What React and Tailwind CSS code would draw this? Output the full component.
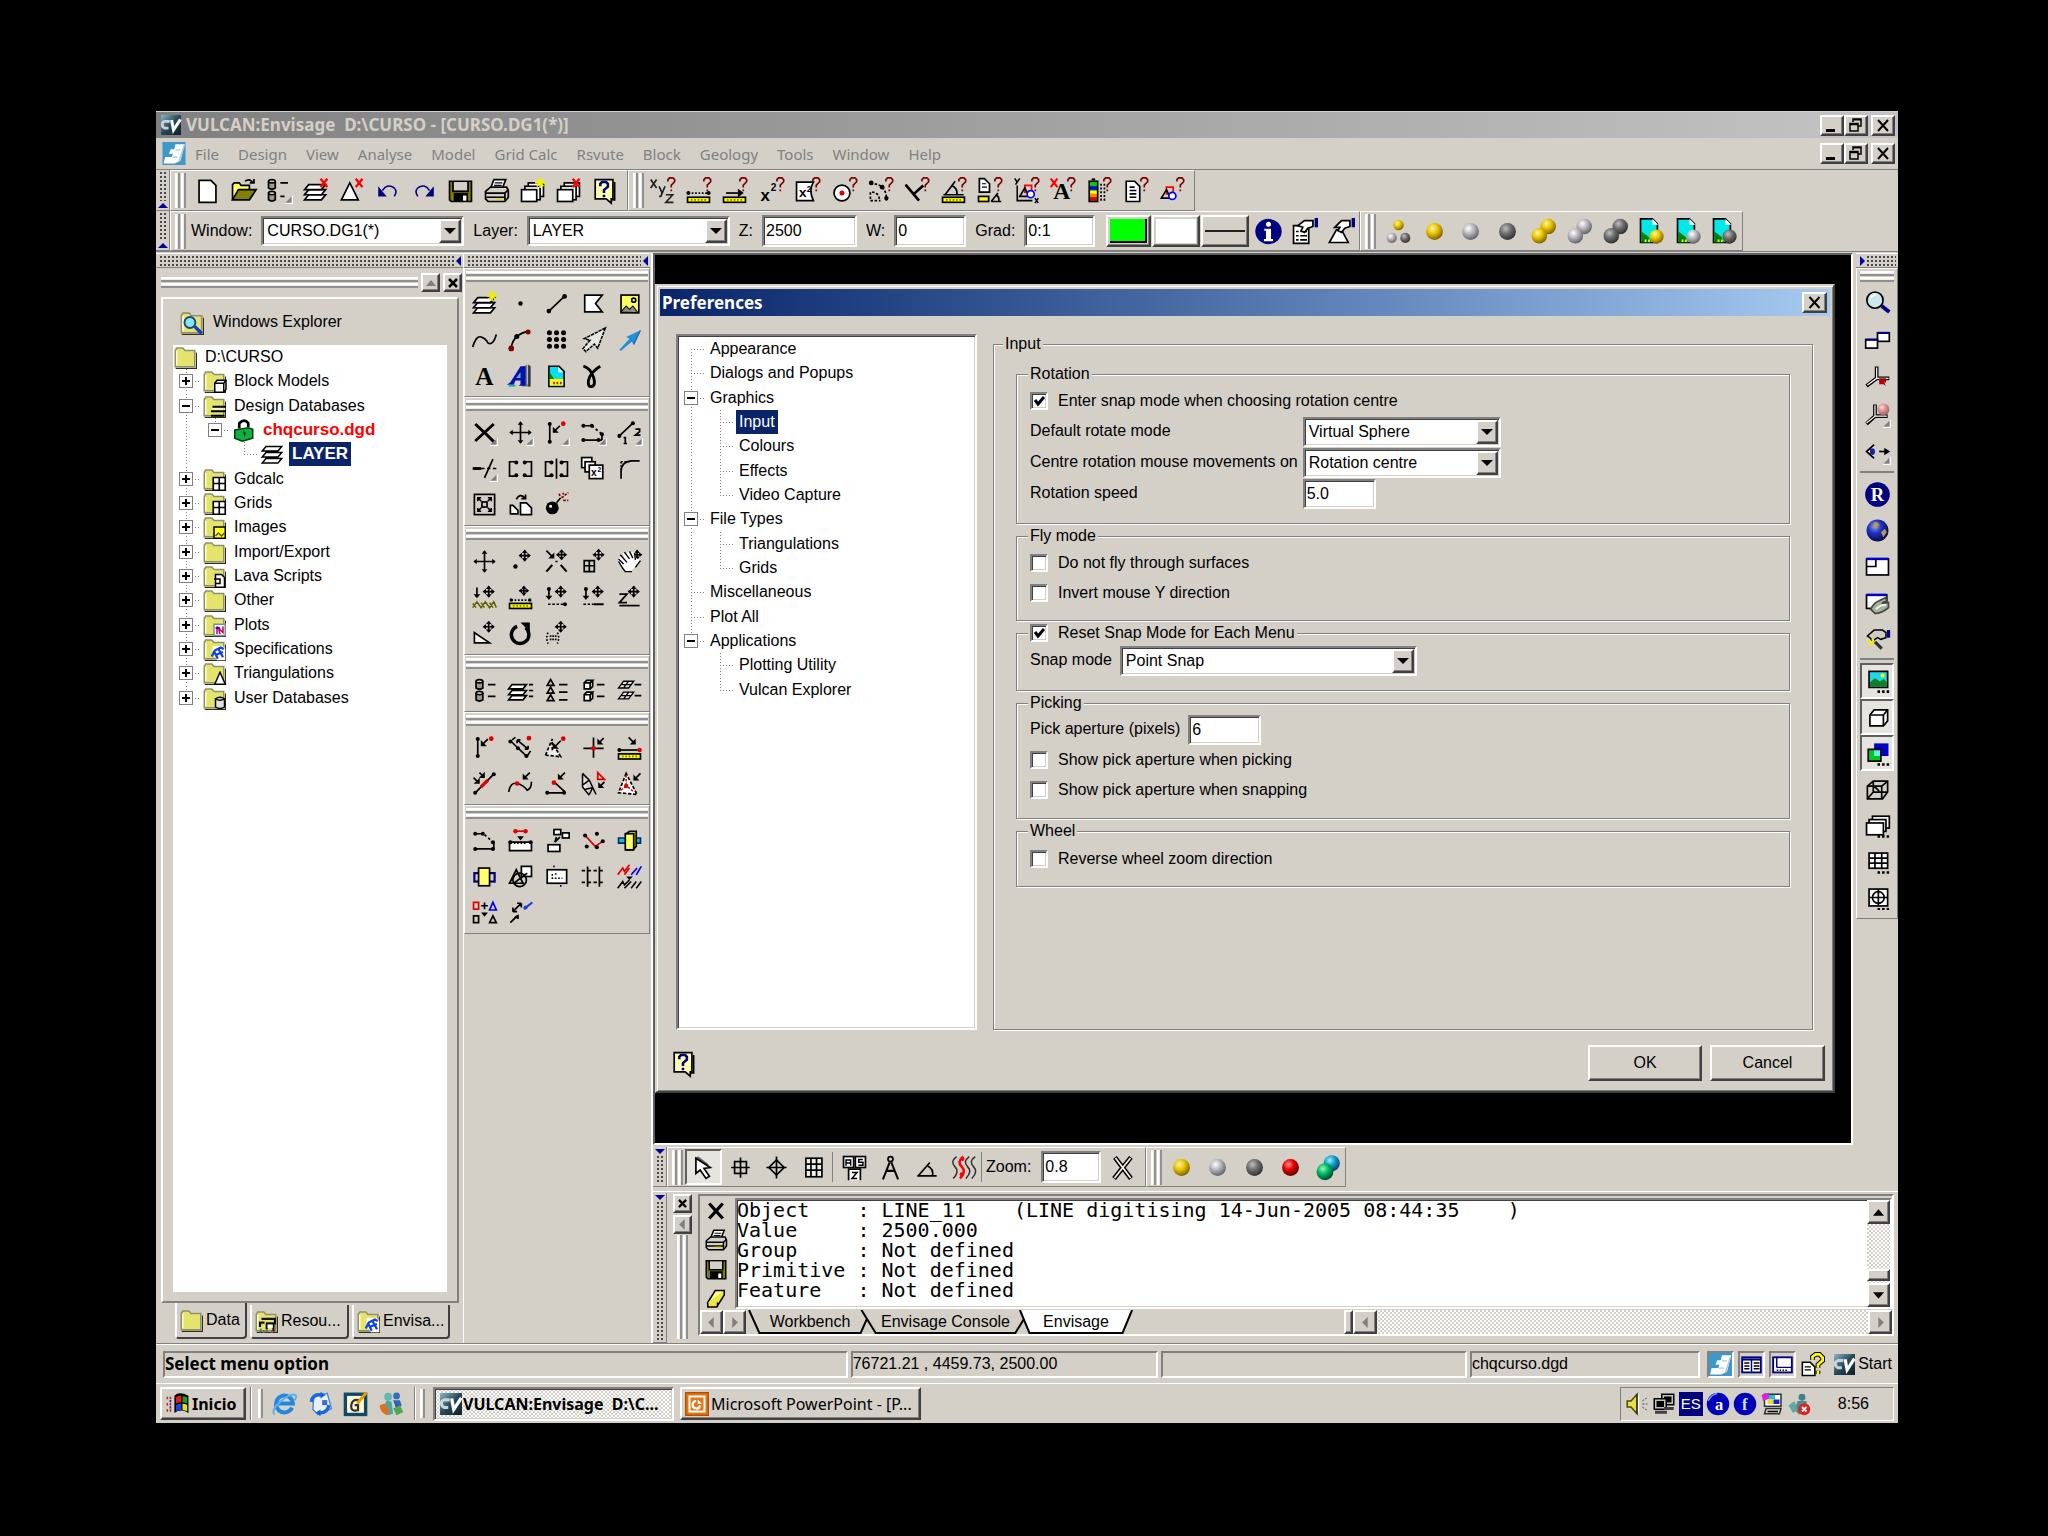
import React, { createElement } from 'react';

const SANS = "font-['Liberation_Sans',Arial,sans-serif]";
const UI = "font-['Noto_Sans',Tahoma,sans-serif]";
const RAISED =
  'border-2 border-t-white border-l-white border-r-[#404040] border-b-[#404040] bg-[#d4d0c8] shadow-[inset_-1px_-1px_0_#808080]';
const SUNKEN =
  'border-2 border-t-[#808080] border-l-[#808080] border-r-white border-b-white shadow-[inset_1px_1px_0_#404040,inset_-1px_-1px_0_#d4d0c8]';
const THIN_SUNKEN = 'border-2 border-t-[#808080] border-l-[#808080] border-r-white border-b-white';
const HATCH = 'bg-[conic-gradient(#fff_25%,#d4d0c8_0_50%,#fff_0_75%,#d4d0c8_0)] bg-[size:4px_4px]';
const DOTS = 'bg-[conic-gradient(at_2px_2px,transparent_75%,#484848_0)] bg-[size:4px_4px]';

/* ---------- drawing helpers (16 x 16 units) ---------- */
const g = (...k) => createElement('g', null, ...k);
const s = (d, c = '#000', w = 1, fill = 'none', dash) => (
  <path d={d} stroke={c} strokeWidth={w} fill={fill} strokeDasharray={dash} />
);
const f = (d, c = '#000') => <path d={d} fill={c} />;
const dot = (x, y, r = 1.2, c = '#000') => <circle cx={x} cy={y} r={r} fill={c} />;
const ring = (x, y, r, c = '#000', fill = 'none', w = 1) => (
  <circle cx={x} cy={y} r={r} stroke={c} strokeWidth={w} fill={fill} />
);
const txt = (x, y, t, size, c = '#000', fam = 'Liberation Sans', style = 'normal', weight = 'bold') => (
  <text x={x} y={y} fontSize={size} fill={c} fontFamily={fam} fontStyle={style} fontWeight={weight}>{t}</text>
);
const RED = '#e00000';
const DK = '#800000';
const NAVY = '#000080';
const q = s('M11.2 2.6V1.5l1-1h2l1 1v1.3l-2 2v1.4M13.2 7.4v1', DK, 1);
const redX = (x = 10.5, y = 1) => s(`M${x} ${y}l4 5M${x + 4} ${y}l-4 5`, '#ff0000', 1.4);
const ruler = (y = 12) => g(<rect x="1.5" y={y} width="13" height="3" fill="#ffff00" stroke="#000" />, s(`M3.5 ${y + 1.5}h9`, '#808000', 1, 'none', '1 1'));
const sheet = (y) => s(`M4 ${y}h10l-2.5 3H1.5z`, '#000', 1, '#fff');
const layers = g(sheet(10.5), sheet(7.5), sheet(4.5));
const corner = g(f('M11 16h5v-5z', '#fff'), f('M11.5 15.2h3.7v-3.7z', '#808080'));
const star = s('M12.5 .5v6M9.5 3.5h6M10.5 1.5l4 4M14.5 1.5l-4 4', '#f0f000', 1);
const move = (x, y, r) =>
  g(
    s(`M${x - r} ${y}h${2 * r}M${x} ${y - r}v${2 * r}`, '#000', 1),
    f(`M${x - r - 0.6} ${y}l2-1.7v3.4zM${x + r + 0.6} ${y}l-2-1.7v3.4zM${x} ${y - r - 0.6}l-1.7 2h3.4zM${x} ${y + r + 0.6}l-1.7-2h3.4z`),
  );
const arrDL = (x, y, l = 4) => g(s(`M${x + l} ${y - l}L${x} ${y}`), f(`M${x - 0.7} ${y + 0.7}v-3.6l3.6 3.6z`));
const arrDR = (x, y, l = 4) => g(s(`M${x - l} ${y - l}L${x} ${y}`), f(`M${x + 0.7} ${y + 0.7}v-3.6l-3.6 3.6z`));
const arrD = (x, y1, y2) => g(s(`M${x} ${y1}V${y2}`), f(`M${x - 2} ${y2 - 1}h4l-2 2.5z`));
const page = (x, y, w, h) => s(`M${x} ${y}h${w - 3}l3 3v${h - 3}h-${w}z`, '#000', 1, '#fff');
const shapes = (x, y) =>
  g(
    s(`M${x + 3} ${y}h4v4h-4z`, '#ff0000'),
    s(`M${x} ${y + 6.5}l3-5 2.4 5z`),
    ring(x + 6.5, y + 5.2, 2.1, '#0000ff', '#fff'),
  );
const ball = (x, y, r, id) => <circle cx={x} cy={y} r={r} fill={`url(#${id})`} />;
const picPage = (id) =>
  g(
    s('M1.5 .5h7l3 3v11h-10z', '#000', 1, '#00e8e8'),
    f('M2 8l4 3 2 3.500H2z', '#008000'),
    f('M8.500 .5v3.500h3.500z', '#fff'),
    s('M4 13.500h5', '#ffff00', 1.500, 'none', '1 1'),
    ball(11, 11, 4.2, id),
  );
const cyl = (x, y) => g(s(`M${x} ${y + 1}v4q2 1.500 4 0v-4`, '#000', 1, '#9a9a90'), <ellipse cx={x + 2} cy={y + 1} rx="2" ry="1" fill="#d0d0c8" stroke="#000" />);
const cube = (x, y) => s(`M${x} ${y + 1.5}h3.500v3.500h-3.500zM${x} ${y + 1.500}l1.500-1.500h3.500l-1.500 1.500M${x + 5} ${y}v3.500l-1.500 1.500`, '#000', 1, '#fff');
const win = (x, y, w = 9, h = 8) => <rect x={x} y={y} width={w} height={h} fill="#fff" stroke="#000" />;
const folder = g(
  f('M1.500 15.200h13.800V4.500l.7 1v10.500H2z', '#303010'),
  s('M1.500 14.500v-11l1-1.500h4l1.500 1.700h6.500v10.800z', '#909070', 1, '#e4e46c'),
  s('M2.500 13.500v-9.500', '#ffffd0'),
);

const ICONS = {
  new: page(3, 2, 10, 13),
  open: g(
    s('M1.500 13.500v-9l1-1h3l1 1.500h5v2.500', '#000', 1, '#ffff60'),
    s('M1.500 13.500l3.500-6h10.500l-4 6z', '#000', 1, '#808000'),
    s('M9 2.500q2.500-2 4.500.7M14.200 1.200v2.300h-2.500'),
  ),
  dbs: g(cyl(1.500, 1.500), cyl(1.500, 8.500), s('M8.500 3.500h4.500M8.500 11.500h2.500'), corner),
  layersX: g(layers, redX(11, 1)),
  triX: g(s('M2 13.500L7 3.500l5 10z', '#000', 1, '#fff'), redX(10.500, 1)),
  undo: g(s('M5 8q3-4.500 7-1.500 2 2 0 5', NAVY, 0.900), f('M2.500 5.500v6h5z', NAVY)),
  redo: g(s('M11 8q-3-4.500-7-1.500-2 2 0 5', NAVY, 0.900), f('M13.500 5.500v6h-5z', NAVY)),
  save: g(
    s('M1.500 2.500h13v12h-12l-1-1z', '#000', 1, '#808000'),
    f('M4 3h8v5H4z', '#d4d0c8'),
    f('M4 9.500h8.500v5H4z'),
    f('M9.500 11h2v3h-2z', '#fff'),
    s('M3.500 2.500V8.500h9v-6'),
  ),
  print: g(
    s('M4.500 6.500l2-5h7l-2 5', '#000', 1, '#fff'),
    s('M7 3.500h4.500M6.500 5h4.500', '#000', 0.7),
    s('M1.500 8.500l3-2.500h9.500l1 2v4l-2 2.500H3l-1.500-1.500z', '#000', 1, '#d4d0c8'),
    s('M1.500 9.500h11.500v4.500M2 12h11M13 9.500l2-2'),
    f('M7.500 12.500h4v1h-4z', '#e0e000'),
  ),
  winNew: g(win(5.500, 3.500), win(3.500, 5.500), win(1.500, 7.500, 9, 7), star),
  winDel: g(win(5.500, 3.500), win(3.500, 5.500), win(1.500, 7.500, 9, 7), redX(10.500, 1)),
  help: g(
    s('M2.500 1.500h10.500v11.500h-1v2.500l-3-2.500h-6.500z', '#000', 1, '#ffffb0'),
    s('M14 3v10.500h-1.500', '#000', 1),
    s('M5.500 5.500V4l1-1h2.500l1 1v1.700l-2.300 2v1.800M7.700 10.500v1.500', NAVY, 1.500),
  ),
  xyz: g(s('M1 1.500l3.500 5M4.500 1.500l-3.500 5M6 5.500l1.800 4M9.500 5.500L7 11.500H6M10 10.500h4l-4 4.500h4.500', '#202020', 1), q),
  dist: g(s('M2 9.500h12', '#000', 1, 'none', '1 1'), dot(2, 9.500), dot(14, 9.500), ruler(12), q),
  bearing: g(s('M3 9.500h8'), f('M10 7l3.500 2.500L10 12z'), ruler(12), q),
  sq: g(txt(1.500, 14, 'x', 10), txt(7.500, 8.500, '2', 6), q),
  sqPage: g(s('M1.500 3h10q-3 5 0 11h-10z', '#000', 1, '#fff'), txt(3, 12, 'x', 8), txt(7.500, 9, '2', 5), q),
  circ: g(ring(6.500, 9.500, 4.700, '#000', '#fff'), dot(6.500, 9.500, 1.500, RED), q),
  arc: g(s('M2 4h2q7 1 7.500 8v2M2 9v5h6M3 9q4 0 4.500 5', '#000', 1, 'none', '1.500 1'), dot(2.500, 3.500, 1.400), dot(9, 6, 1.400), dot(11.500, 12.500, 1.300), q),
  cross: g(s('M1.500 4.500l8 9.500M12 5l-5.500 5', '#000', 1.600), q),
  angleR: g(s('M2 10.500h12M3 10.500l6-8M7 5q3.500 1.500 3 5.500'), ruler(12), q),
  docR: g(page(2, 1, 6, 8), s('M3.500 4h2.500M3.500 6h3', '#000', 0.700), <rect x="1.500" y="11.500" width="6" height="3" fill="#ffff00" stroke="#000" />, s('M9 14.500h6M9 14.500l4-5M12 10.500q2 1.500 1.500 4'), q),
  axes: g(s('M2.500 5v9h9M1 .8l1.300 2M4 .8L1.500 4.500M13 12.500l2 3M15 12.500l-2 3', '#000', 0.900), shapes(4, 5), q),
  textX: g(s('M1 1l4 5M5 1l-4 5', '#ff0000', 1.300), txt(2.500, 12.800, 'A', 14, '#000', 'Liberation Serif'), q),
  legend: g(
    <rect x="2.500" y="2.500" width="5" height="12" stroke="#000" fill="#008000" />,
    f('M3 3h4v2.500H3z', '#00d000'), f('M3 5.500h4v2H3z', '#0000ff'), f('M3 8h4v2H3z', '#ffff00'), f('M3 10h4v2H3z', '#ff8000'), f('M3 12h4v2H3z', '#e00000'),
    f('M4 .8h2V2H4z'), s('M9.500 4v10M11.500 4v10', '#000', 1, 'none', '1.200 1'), q,
  ),
  docQ: g(page(2.500, 2.500, 8, 12), s('M4.500 6h3M4.500 8h4M4.500 10h4M4.500 12h4'), q),
  shapesQ: g(shapes(2, 6), q),
  info: g(<ellipse cx="8" cy="8" rx="7.800" ry="7.500" fill={NAVY} />, dot(8, 3.700, 1.500, '#fff'), f('M5.500 6.300h4v6.200h1.200v1.300H5.300v-1.300h1.200V7.600h-1z', '#fff')),
  props: g(
    s('M1.500 4.500h9v10.500h-9z', '#000', 1, '#fff'), s('M3 8h1.500M5.500 8h4M3 10.500h1.500M5.500 10.500h4M3 13h1.500M5.500 13h4'),
    s('M4 4.500l4-3h5v3.500l-3 1-2 2.500-2-1 1-2z', '#000', 1, '#fff'), f('M14 0h2v5.500h-2z', NAVY),
  ),
  triProps: g(
    s('M.8 14.500L5 7h3l4 7.500z', '#000', 1, '#fff'),
    s('M4 5.500l4-4h5v3.500l-3 1-2 2.500-2-1 1-2z', '#000', 1, '#fff'), f('M14 0h2v5.500h-2z', NAVY),
  ),
  balls3: g(ball(8, 4.200, 3.100, 'gold'), ball(4, 11.800, 3, 'silver'), ball(12, 11.800, 3, 'iron')),
  ballGold: ball(8, 8, 5, 'gold'),
  ballSilver: ball(8, 8, 5, 'silver'),
  ballIron: ball(8, 8, 5, 'iron'),
  ballRed: ball(8, 8, 5, 'red'),
  ballsGold: g(ball(10.800, 5, 4.600, 'gold'), ball(5.500, 10.500, 4.600, 'gold')),
  ballsSilver: g(ball(10.800, 5, 4.600, 'silver'), ball(5.500, 10.500, 4.600, 'silver')),
  ballsIron: g(ball(10.800, 5, 4.600, 'iron'), ball(5.500, 10.500, 4.600, 'iron')),
  ballsSea: g(ball(10.500, 5.500, 4.800, 'cyan'), ball(6.500, 10.500, 5, 'green')),
  picGold: picPage('gold'),
  picSilver: picPage('silver'),
  picIron: picPage('iron'),

  layersNew: g(layers, star),
  point: dot(8, 8, 1.300),
  line: g(s('M3.500 12.500l9.500-9'), dot(3.500, 12.500, 1.400), dot(12.800, 3.800, 1.400)),
  poly: s('M2.800 3h10.400l-4 5 4 5H2.800z', '#000', 1, '#fff'),
  image: g(<rect x="3" y="3" width="10.500" height="10.500" fill="#ffff60" stroke="#000" />, ring(10.500, 6, 1.200), s('M3 13l3-3.500 2 2 2-2 3 4z', '#000', 0.600, '#909080')),
  curve: s('M1 12.500q2-7 5-6t4 3.500q3 2 5-5'),
  arc3: g(s('M2.500 13q1-8.500 11-10'), dot(2.500, 13.300, 1.700, DK), dot(12.500, 3.500, 1.500, DK), dot(5.800, 6.200, 1.500)),
  dots9: g(...[3.800, 8, 12.200].flatMap((x) => [4, 8, 12].map((y) => dot(x, y, 1.500)))),
  arrowO: s('M15 1.200l-4.500 12-2-2.500-5 4.500-1.800-1.800 4.300-5L2.500 7.500z', '#000', 0.900, '#e8e6e0', '2 .5'),
  arrowB: g(f('M14.500 2.500l-4 8.500-1.200-1.700-6.500 5.500-.8-.8 6-6.500L6 6.500z', '#2090d8'), s('M14.500 2.500l-4 8.500', '#2060a0', 0.700)),
  A: txt(2.500, 13.500, 'A', 15, '#000', 'Liberation Serif'),
  A3d: g(f('M9.500 3l2.500-1.500v11.500l2 1.500H9z', '#707c84'), f('M12.500 1.500l1.500 1v12h-1.500z', '#303840'), f('M8 2.500h3V14H7l1-1v-2H5l-1 2.500H0l2-1.500z', '#0010a8'), f('M8 6v3.500H5.500z', '#50c0e8'), s('M1 14h4', '#20b0a0', 1.200)),
  imgPage: g(s('M3.500 2.500h6l3 3v9h-9z', '#000', 1, '#00e0f0'), f('M4 10h8v4H4z', '#ffff00'), f('M4 6l2.500 4H4z', '#008000'), f('M9 3v3h3z', '#fff'), s('M6 12.500h6', '#c00000', 1.500, 'none', '1 1')),
  ribbon: s('M2 2.500q4 1 6 6.500q1.500 5-1 5.500t-2-3.500q1-5 7-8.500', '#000', 1.700),
  del: g(s('M2.500 3l6 5.500M13.500 3l-11 10M8.500 8.500l5.500 5.500', '#000', 1.700), corner),
  moveM: g(move(8, 8, 6)),
  moveC: g(move(8, 8, 6), corner),
  ptMove: g(s('M4 3v10.500'), dot(4, 3), dot(4, 13.500), arrDL(6.500, 7.500, 3.500), dot(12, 2.800, 1.400, RED), corner),
  lineAdd: g(s('M2 4h5M2 12.500h11M13 12.500v-3.500'), s('M7 4l6 5', '#000', 1, 'none', '1.500 1.500'), dot(2, 4), dot(7, 4), dot(13, 9), dot(2, 12.500), dot(11, 12.500), corner),
  renum: g(s('M2 10l8-7.500'), dot(2, 10), dot(10, 2.500), s('M5.500 10.500v4M4.500 11h1M4.500 14.500h2M11.500 6h2.500v1.500l-2.500 2h3'), corner),
  cut: g(s('M1 8h5', '#000', 1.700), s('M6 8h9', '#000', 1, 'none', '2 1.500'), s('M13 2.500L8 13.500'), corner),
  brk: g(s('M6 4H1.500v8.500H6M10 4h4.500v8.500H10'), dot(5.500, 4.500), dot(5.500, 12), dot(10.500, 4.500), dot(10.500, 12)),
  brk2: g(s('M6 4H1.500v8.500H6M10 4h4.500v8.500H10M8 2v12'), dot(5, 4.500), dot(5, 12), dot(11, 4.500), dot(11, 12)),
  sqWin: g(win(1, 1.500, 6, 6), win(3, 4, 6, 6), win(5.500, 6, 8, 8), txt(6.500, 12.500, 'x', 6), txt(10.300, 9.800, '2', 4)),
  fillet: g(s('M3 4h5M3 4v6', '#000', 1, 'none', '1 1'), s('M3 14V10q0-6 6-6.500h5')),
  expand: g(<rect x="2" y="2" width="12" height="12" stroke="#000" />, <rect x="6.500" y="6.500" width="3" height="3" stroke="#000" />, s('M4 4l2 2M12 4l-2 2M4 12l2-2M12 12l-2-2M4 6V4h2M10 4h2v2M4 10v2h2M12 10v2h-2', '#000', 0.900)),
  copy: g(page(2, 8.500, 4.500, 5), page(8, 7, 6.500, 7), s('M5.500 5q2-4 5-1M11 2v2.500H8.500')),
  bomb: g(dot(5.500, 10, 3.800), s('M8 7l2.500-3'), s('M11 4l4-3M12 5.500h3M10 3L9.500 1M12 2v-1', DK, 1, 'none', '1.500 .8'), ring(4.500, 9, 0.400, '#fff')),
  mPt: g(move(10.500, 4.500, 3), dot(5, 11, 1.300)),
  mX: g(move(11, 4, 2.700), arrDR(6, 5.500), s('M2 14l3.500-4M14 14l-3.500-4M8 7.500v1', '#000', 1.300)),
  mGrid: g(move(11, 4, 3), s('M2.500 7.500h6v6.500h-6zM5.500 7.500v6.500M2.500 10.500h6')),
  hand: g(move(12.500, 4, 2.500), f('M3 5l2 1-1-3 2 .5L7.500 2l2 .5L11 3l1 3 2.500 1-3 4-2.500 2.500H5.500L3 10 1 7z', '#fff'), s('M1.500 6.500l3 3M2.500 4l4 4.500M5 2.500l3 4M8 2l2 4M11 3l.5 4M1.500 8l2.500 4 1.500 2h4M14.500 7.500l-3 4', '#000', 0.800)),
  mSurf: g(arrD(3.500, 2, 7), move(10.500, 4.500, 3), s('M1 14l2.500-3.500 2.500 3.500 2.500-3.500 2.500 3.500 2.500-3.500L15 14M1 11.500l2 2.500M6 11l2 3M11 11l2 3', '#606000', 0.900)),
  mRule: g(move(10, 4, 2.500), s('M2.500 9.500h11', '#000', 1, 'none', '1 1'), dot(2.500, 9.500, 1), dot(13.500, 9.500, 1), ruler(11.500)),
  mLine: g(dot(3.500, 3), arrD(3.500, 3, 8), move(10.500, 4.500, 3), s('M3 12h10', '#000', 1, 'none', '1.500 1'), dot(13, 12, 1.200)),
  mLine2: g(dot(3.500, 3), arrD(3.500, 3, 8), move(10.500, 4.500, 3), s('M2 12h6', '#000', 1, 'none', '1.500 1'), s('M8 12h6', '#000', 1.200)),
  mZ: g(s('M2 6h4.500L2 11h4.500'), move(10.500, 4.500, 3), s('M2 12.800h12')),
  mTri: g(move(10.500, 4, 3), s('M2 7.500v6h9z', '#000', 1, '#f4f2ec')),
  rotate: g(s('M6 3.800a5.200 5.200 0 1 0 5 .8', '#000', 2), f('M8 1.500h5.500V7z')),
  mBrk: g(move(10.500, 4, 3), s('M3 7.500q-1.500 3 0 6.500M8.500 7.500q1.500 3 0 6.500M4.500 9v4M6 9v4M7.500 9v4', '#000', 1, 'none', '1 1')),
  dbList: g(cyl(3, 1.500), cyl(3, 8.500), s('M10 4.500h4.500M10 11.500h4.500')),
  layList: g(s('M3 4.500h8.500l-2 2.500H1zM3 8h8.500l-2 2.500H1zM3 11h8.500l-2 2.500H1z', '#000', 1, '#fff'), s('M13 4.500h2.500M13 8h2.500M13 11.500h2.500')),
  triList: g(s('M2.500 5h4l-2-3.500zM2.500 9.500h4l-2-3.500zM2.500 14h4l-2-3.500z'), s('M9.500 4.500h5M9.500 9h5M9.500 13.500h5')),
  cubeList: g(cube(2.500, 2), cube(2.500, 9), s('M10 4.500h4.500M10 11.500h4.500')),
  gridList: g(s('M4.500 2.500h6l-3 4H1.500zM4.500 9h6l-3 4H1.500zM7.500 2.500l-3 4M3 4.500h6M7.500 9l-3 4M3 11h6', '#000', 0.800, '#e8e6e0'), s('M11 4.500h4M11 11h4')),
  snapPt: g(s('M4 3v10'), dot(4, 3), dot(4, 13), arrDL(6.500, 6.500, 3.500), dot(12, 2.800, 1.400, RED)),
  snapLn: g(s('M2 4l10 9.500'), s('M5 2L3 3.500M14 10l-2 3', '#000', 1), dot(2, 4.500), dot(6.500, 8.500), dot(11.500, 13), s('M6 3.500l6.500 5.500M6 3.500v2M6 3.500h2M12.500 9v-2M12.500 9h-2'), dot(13, 2.500, 1.400, RED)),
  snapTri: g(s('M1.500 12.500L5.500 3v7M1.500 12.500l9 1-3-5', '#000', 1, '#f0eee8', '2 1'), arrDL(6.500, 8, 4), dot(12, 2.800, 1.400, RED)),
  snapX: g(s('M2 8.500h12M8 2v12'), dot(8, 8.500, 1.400, RED), arrDL(11, 5.500, 3)),
  snapRule: g(arrDR(11, 5.500, 3.500), s('M2 9.500h12'), dot(2, 9.500), dot(14, 9.500, 1.300, RED), ruler(11.800)),
  snapMid: g(s('M2.500 13.500l11-11'), s('M6 10l4-4', RED, 2), dot(2.500, 13.500), dot(13.500, 2.500), arrDR(4.500, 7.500, 3), arrDR(7.500, 4, 2.500)),
  snapCrv: g(s('M1 13q1-6 5-5t6 4q2.500-1 2.500-5'), dot(6, 8, 1.400, RED), arrDL(10, 5, 3.500)),
  snapAng: g(s('M2.500 13.500h10M13 13L7 7.500'), dot(2.500, 13.500), dot(12.500, 13.500), dot(6.500, 7.500, 1.400, RED), arrDL(9.500, 5, 3.500)),
  snapSurf: g(s('M1.500 2l4 4 4 8.500M1.500 2v8l4 5M1.500 9l4-3M2.500 11.500l5-1M5.500 14.500l2-4', '#000', 0.900, '#f0eee8'), s('M10.500 1.500v4h4z', RED), arrDL(11.500, 10, 3)),
  snapCen: g(s('M6 2L1.500 13.500l11 1z', '#000', 1, '#fff', '2 1'), s('M6 3v6M3 12l3-2.500M10 12.500L7 10', RED, 0.900, 'none', '1.500 .8'), dot(6, 9.500, 1.300, RED), arrDL(11, 5.500, 3.500)),
  ed1: g(s('M2.500 4h5M2.500 13h11v-4'), s('M8 4.500l5 4.500', '#000', 1, 'none', '1.500 1.500'), dot(2.500, 4), dot(7, 4), dot(13, 9), dot(13, 13), dot(2.500, 13)),
  ed2: g(s('M5 2.500h6', RED), dot(5, 2.500, 1.300, RED), dot(11, 2.500, 1.300, RED), f('M6 5.500h4L8 8z'), s('M1.500 9v5h13V9z', '#000', 1, '#fff'), s('M4 9.500h8', '#000', 1, 'none', '1 1'), dot(2, 9), dot(14, 9)),
  ed3: g(win(6.500, 1.500, 4, 3), win(11.500, 3.500, 4, 3), win(3, 10.500, 7, 4), s('M8 6l-1 3M10 6L7 9')),
  ed4: g(s('M3 5l6 6.500 4.500-3', RED), dot(3, 5), dot(10, 4), dot(13.500, 8.500), dot(10, 12), dot(4, 11.500)),
  ed5: g(s('M1.500 6.500h13v3h-13z', '#003060', 1, '#20b8d8'), s('M6 4l2-1.500h4v9l-2 2H6z', '#000', 1, '#c8c800'), <rect x="5.500" y="4" width="5" height="9.500" fill="#ffff60" stroke="#000" />),
  ed6: g(<rect x="2" y="6" width="12" height="5" stroke={NAVY} strokeWidth="1.300" />, <rect x="4.500" y="3" width="6.500" height="10.500" fill="#ffff70" stroke="#000" />),
  ed7: g(win(8.500, 2, 6, 6), s('M1.500 12L5.500 4l4 8z'), ring(7.500, 10, 4, '#000'), s('M4 12l8-6')),
  ed8: g(<rect x="2.500" y="4" width="11.500" height="8" fill="#fff" stroke="#000" />, s('M5.500 6.500v2.500h6M7 6.500h2M10.500 13v2M6.500 1.500v2', '#000', 0.900, 'none', '1 1')),
  ed9: g(s('M4.500 2v12M11.500 2v12'), s('M1 4.500h14M1 11.500h14', '#000', 1, 'none', '2 1.500')),
  ed10: g(s('M1 7l3-4 1 2 3-4M5 7l3-4', RED), s('M9 7l3.500-4M12 7l3-5', '#0000e0'), f('M6 8h4l-2 2z'), s('M1 15l3-4 1 2 3-3M5 15l4-4M9 15l3-4M12 15l3-4', '#000', 0.900)),
  ed11: g(<rect x="1.500" y="2" width="3" height="4" stroke={RED} />, s('M8 2v4M6 4h4'), s('M11 6.500h4l-2-4.500z', '#0000e0'), f('M6 8h4l-2 2.500z'), <rect x="1.500" y="10" width="3" height="4" stroke="#000" />, s('M11 14h4l-2-4z')),
  ed12: g(s('M2 14l4-4', '#000', 1.200), f('M4 11l3-2v3z'), s('M3.500 7.500l5-5M3.500 7.500v-2.500M3.500 7.500h2.500M8.500 2.500h-2.500M8.500 2.500v2.500'), s('M10 6l5-4', '#2040e0', 1.200), dot(11, 5, 1.200, '#2040e0')),

  magnify: g(ring(6.500, 6, 4.800, '#000', '#c8e8ec'), s('M4 4.500q1-1.500 3-1.500', '#fff', 1.200), s('M10.500 9.500l4.500 3.500', NAVY, 2.300)),
  twoWin: g(<rect x="8" y="3.500" width="7" height="5" fill="#fff" stroke="#000" />, s('M8 3.500h7', NAVY, 1.300), <rect x="1" y="7.500" width="7" height="5" fill="#fff" stroke="#000" />, s('M1 7.500h7', NAVY, 1.300)),
  axis: g(s('M7.500 1.500v7l-6 4.500M7.500 8.500h7.500', '#000', 2.200), s('M7.500 2v6.500l-5.500 4M7.500 8.500h7', '#fff', 0.700), f('M9 8.500h4v2.500h-1l1 2-1.500-1L9 12z', '#b00000')),
  axisBall: g(s('M6.500 2v7l-5 4.500M6.500 9h7.500', '#000', 2.200), s('M6.500 2.500V9l-5 4M6.500 9h7', '#fff', 0.700), ball(11.500, 5, 3.500, 'pink'), corner),
  eye: g(s('M6 4L1.500 8l4.500 4', '#000', 1, '#f4f4ff'), f('M3.500 6.500q3-1.500 3 1.500t-3 1.500z', '#2020a0'), s('M9 8h4'), f('M12 5.800L15.500 8 12 10.200z'), corner),
  R: g(<circle cx="8" cy="8" r="7.300" fill={NAVY} />, txt(4, 12, 'R', 11, '#fff', 'Liberation Serif')),
  globe: g(ball(8, 8, 6.500, 'earth'), f('M6 3q3 0 3 2l-2 2-2-1zM10 9l2.500-2 1 2-2 3z', '#b09850')),
  winSplit: g(<rect x="1.500" y="3.500" width="13" height="9.500" fill="#fff" stroke="#000" />, s('M1.500 3.500h13', '#0000d0', 1.500), s('M1.500 8h5.500V4')),
  winPic: g(<rect x="1.500" y="3.500" width="12" height="8" fill="#fff" stroke="#000" />, s('M1.500 3.500h12', '#0000d0', 1.500), s('M4 12q2-4 5-5l4-2 .5 2-3 1.500 4-.5v3q-4 3.500-8 3.500z', '#404840', 1, '#a8b0a0'), s('M7 12q3-3 6-2.500', '#f0f0e8', 1.200)),
  handWand: g(s('M2 6.500l4-3.500h5l2 1.500v3l-3 1-2-1-3 2-1-1.500z', '#000', 0.900, '#d0ccc4'), f('M13.500 3h2v4.500h-2z', NAVY), s('M2 9.500l3 1M3.500 12l2-1.500M5 8l.5 2', '#f0f000', 1.300), s('M6.500 10l4 4', '#303030', 1.800)),
  picture: g(<rect x="3" y="2" width="11" height="9.500" fill="#20d8e8" stroke="#000" />, f('M3.500 8.500l3-2.500 3 2 2-1.500 2 2v2.500h-10z', '#108020'), dot(11, 4.500, 1.200, '#ffff00'), s('M8 14h7', '#000', 1.500, 'none', '1.500 1.200')),
  box: g(s('M3.500 6.500L6 3.500h8v6.500l-2.500 3h-8z', '#000', 1, '#fff'), s('M3.500 6.500h8v6.500M11.500 6.500L14 3.500')),
  layersCol: g(f('M6 2h8.500v7.500H6z', '#0000c8'), f('M2.500 5.500h7.500v7H2.500z', '#00c820'), f('M6 5.500h4v4H6z', '#60f0f0'), s('M2.500 5.500h7.500v7H2.500z'), s('M8 14.500h7', '#000', 1.500, 'none', '1.500 1.200')),
  wire: s('M2 6l3.500-3h8.500v6.500l-3 4H2zM2 6h8.500l3.500-3M10.500 6v7M5.500 3v6.500h8.500M2 13.500l3.500-4M6 6l3 3'),
  wins: g(win(5, 2.500, 10, 7), win(3, 4.500, 10, 7), win(1.500, 6.500, 10, 7), s('M8 14.500h7', '#000', 1.500, 'none', '1.500 1.200')),
  grid: g(<rect x="3" y="3" width="11" height="9" fill="#fff" stroke="#000" />, s('M6.500 3v9M10.500 3v9M3 6h11M3 9h11'), s('M8 14.500h7', '#000', 1.500, 'none', '1.500 1.200')),
  gridTarget: g(<rect x="3" y="3" width="11" height="10" fill="#fff" stroke="#000" />, ring(8.500, 8, 3.500), s('M8.500 3v10M3 8h11'), s('M8 14.800h7', '#000', 1.300, 'none', '1.500 1.200')),

  pointer: g(f('M3 2l2-.5 6 4.500-1 2-3-1z', '#606060'), s('M3.500 2.500v9l2.500-2 3.500 5 2-1.300-3.200-4.700 3.700-.5z', '#000', 1, '#fff')),
  snapSq: g(<rect x="4.500" y="4.500" width="7" height="7" stroke="#000" />, s('M8 2v12M2.500 8h11')),
  snapDi: g(s('M8 3.500L12.500 8 8 12.500 3.500 8z'), s('M8 1.500v13M2 8h12')),
  gridB: g(<rect x="3.500" y="2.500" width="9.500" height="11" fill="#f0f0e8" stroke="#000" />, s('M6.500 2.500v11M9.800 2.500v11M3.500 6h9.500M3.500 9.500h9.500')),
  keys: g(win(1.500, 1.500, 6, 6.500), win(8.500, 1.500, 6, 6.500), f('M4.500 9h7v6.500h-7z', '#fff'), s('M4.500 15.500V9h7v6.500'), s('M3 7V3.500h2.700V7M3 5.300h2.700M13 3.200h-2.500v1.700H13v1.800h-2.700M6.500 11h3l-3 3.500h3', '#000', 0.900)),
  compass: g(ring(8, 3, 1.500), s('M7.500 5L3.500 15M8.500 5l4 10M5 10h6', '#000', 1.200)),
  angle: s('M2.500 13h11.500M3 13l7-8M8.500 7q4 2 3 6'),
  waves: g(s('M4.500 1.500q-4 3-1 6t-1 7M12 1.500q-4 3-1 6t-1 7M15.500 1.500q-4 3-1 6t-1 7', '#303030', 0.900), s('M8.500 1.500q-4 3-1 6t-1 7', '#ff0000', 1.500), dot(8, 3, 1.200, '#ff0000'), dot(7.500, 12, 1.200, '#ff0000')),
  bigX: g(s('M3.500 2l9.500 12.500M13 2L3 14.500', '#000', 2.800), s('M3.800 2.400l9 11.800M12.700 2.400L3.300 14.200', '#f4f4ec', 1)),
  x: s('M3.500 3l9 10M12.500 3l-9 10', '#000', 2.200),
  eraser: g(s('M2.500 11l5-8h6l-4.500 8z', '#000', 1, '#ffff90'), s('M2.500 11v3h6l5-8V3M9 11v3', '#000', 1, '#e8e840')),

  explore: g(folder, ring(7, 8, 3.500, '#204080', '#80e8f8', 1.200), s('M10 10.500l4.500 4.500', '#1040c0', 2.200)),
  folder,
  fBlock: g(folder, s('M8.500 9.500l1.500-2h6v6l-1.500 2h-6z', '#000', 1, '#fff'), s('M8.500 9.500h6v6M14.500 9.500l1.500-2')),
  fLayers: g(folder, s('M7 8.500h9M6 11.500h10M6 14.500h9', '#000', 1.300), s('M6.500 10h9', '#fff', 0.800)),
  fGrid: g(folder, s('M7.500 7h8v8.500h-8zM11.500 7v8.500M7.500 11h8', '#000', 1.100, '#fff')),
  fImage: g(folder, s('M8 8h7.500v7.500H8z', '#000', 1, '#ffff20'), s('M9 14l2-2 2 2 2-2', '#605820')),
  fScript: g(folder, s('M9 7h4l2 2v6.500H9zM8 10h4v3H9', '#000', 1, '#fff')),
  fPlot: g(folder, s('M8 7.500h7.500v7.500H8z', '#8888a0', 1, '#fff'), s('M10 14v-5M12 14l-1-4 3 3v-4', '#c00060'), s('M9 10h3', '#0000e0')),
  fSpec: g(folder, f('M7 6h7l1.500 2v7.500H10L7 11z', '#fff'), s('M6.500 13l2-4 4-2 2 1M8 9.500l2.500 5M11 8l3 5.500M9 12l5-2', '#1040e0', 1.500)),
  fTri: g(folder, s('M8.500 15.500L12 7.500l3.500 8z', '#000', 1, '#fff')),
  fDb: g(folder, s('M9 8.500v5.500q3 2 6 0V8.500q-3-2-6 0q3 2 6 0', '#000', 1, '#e0e0e0')),
  fRes: g(folder, s('M5 6.500h9v3H8M4 12V9h3M13 10v5M8.500 9.500v4', '#101010', 1.500), f('M9 10.500h3.500v2H9z', '#fff'), s('M4.500 13v2.500M8.500 13.500v2', '#20a020', 1.200), s('M6.500 14v2M12 14v2', '#d020c0', 1.200)),
  lock: g(s('M5.500 7V3.500q3.500-3.500 6 0V6', '#000', 1.800), s('M2.500 8l9-1.500 3 1v6l-7 2-5-2z', '#004010', 1, '#10b040'), f('M8 8.500l2 1.500-1 3z', '#004010')),
  sheets: g(s('M4 3h10.500L12 6H1.500zM4 7h10.500L12 10H1.500zM4 11h10.500L12 14H1.500z', '#000', 1, '#fff')),

  cv: g(f('M0 0h16v16H0z', 'url(#steel)'), s('M7 5H3Q1 5.500 1 7.500t2 3h3', '#c8d4dc', 2.200), s('M8.500 4l1.500 8L15.500 3.500', '#fff', 2.400)),
  steps: g(f('M0 0h16v16H0z', '#3c98c8'), f('M9 1.500h6.500l-3 11.500-4 2H.8l1-4.500h4.700l.8-2.300H4.500L5.700 5h2.500z', '#fff'), s('M15 2.500l-3.500 11', '#b0c8d4', 1), s('M9 5.500h3.500M7 10.500h3.500', '#a8ccdc', 0.800)),
  pane1: g(<rect x="1.500" y="3" width="13" height="10.500" fill="#fff" stroke={NAVY} strokeWidth="1.300" />, s('M1.500 4.500h13', NAVY, 1.500), s('M8 4v9', NAVY), s('M3 7h3.500M3 9h3.500M3 11h3.500M9.500 7h4M9.500 9h4M9.500 11h4', '#000')),
  pane2: g(<rect x="1.500" y="3" width="13" height="10.500" fill="#fff" stroke={NAVY} strokeWidth="1.300" />, s('M4 3v7M4 10h10.500', NAVY), s('M4 12h8', '#000', 1, 'none', '1 1')),
  helpDoc: g(page(1.500, 6.500, 8, 8.500), s('M3 9.500h4M3 11.500h4', '#000', 0.800), s('M8 5V3l2-1.500h2.500l2 2v2l-3 2.500v2M11.500 12v2', '#000', 3), s('M8 5V3l2-1.500h2.500l2 2v2l-3 2.500v2M11.500 12v2', '#ffff00', 1.700)),
  flag: g(
    f('M6 3q3-3 9 0v11q-5-3-9 0z'), f('M7 4q2-1.200 3.500-.8v4Q9 7 7 8z', '#e02020'), f('M11.200 3.400q1.500 0 3 .6v4q-1.500-.8-3-.8z', '#20a020'),
    f('M7 9q2-1 3.500-.8v4Q9 12 7 13z', '#2040e0'), f('M11.200 8.200q1.500 0 3 .8v4q-1.500-.8-3-.9z', '#e8e020'),
    s('M1 4.500h4M1 8.500h4M1 12.500h4', '#c02020', 1.500, 'none', '1 1'), s('M3 6.500h2M3 10.500h2', '#2020a0', 1.500, 'none', '1 1'),
  ),
  ie: g(s('M12.500 10.500a5 5 0 1 1 .5-2.500H4', '#2088e0', 2.300), s('M2 14.500q-2-3 4-8t8.500-3.500q1 .7-.5 3', '#60b0e8', 1.200)),
  outlook: g(s('M4 4l8-2 2.500 9-8 3.500-3-3z', '#5080d0', 0.800, '#e8f0fc'), s('M2.500 7q1-5 6-4M13 9q-1 5-6 4.500', '#1868e0', 2), f('M8 1v4l3-2zM8 11.500v4l-3-2z', '#1060d8'), f('M9 6h3v3H9z', '#3070d0')),
  edit: g(<rect x="2" y="2.500" width="12" height="12" fill="#fff8d0" stroke="#104868" strokeWidth="2" />, s('M10 6q-4-1-4.500 3t4 3v-3h-2', '#303030', 1.300), s('M9 8l5.500-6.500', '#e0a000', 1.800)),
  msn: g(dot(6, 4, 2.300, '#60b8b0'), dot(11, 3.500, 2, '#3070c0'), f('M5 6l3 1 1 7-3 1-3-3z', '#48a8a0'), f('M9 6h4l1 3-3 3z', '#3060c0'), f('M1 9l3-1 3 5-2 2q-4-2-4-6z', '#e07020'), f('M9 11l4-2 2 4-4 2z', '#50a850')),
  ppt: g(<rect x="0.500" y="0.500" width="15" height="15" fill="#e07818" stroke="#b85000" />, <rect x="3" y="3" width="10" height="10" stroke="#fff" strokeWidth="1.300" />, s('M10 9a2.500 2.500 0 1 1-2.500-3', '#fff', 1.500), f('M8.500 5v3h3z', '#fff')),
  speaker: g(s('M1.500 6h2.500l4-4.500v13L4 10H1.500z', '#504800', 1, '#e8e040'), s('M9 2v12', '#fff', 1), s('M8 1.500v13', '#303030', 1), s('M11.500 6l3-2M11.500 8h3.500M11.500 10l3 2', '#808080', 0.900, 'none', '1.500 .8')),
  net: g(<rect x="6.500" y="1.500" width="8" height="7" fill="#c0c0c0" stroke="#000" />, f('M8 3h5v4H8z'), <rect x="1.500" y="4.500" width="8" height="7" fill="#c0c0c0" stroke="#000" />, f('M3 6h5v4H3z'), s('M2 13.500h8M8 11h6.500', '#404040', 2)),
  discA: g(dot(8, 8, 7.500, '#0000b8'), s('M1.500 6q2-4.500 6-5', '#60a0f0'), txt(6, 12, 'a', 11, '#fff', 'Liberation Serif')),
  discF: g(dot(8, 8, 7.500, '#0000b8'), txt(6, 12, 'f', 11, '#d0e0ff', 'Liberation Serif')),
  display: g(<rect x="3" y="1.500" width="11" height="8" fill="#fff" stroke="#303030" />, f('M1 2l5-1.500v4L2 6z', '#e020e0'), f('M6 2h4v3H6z', '#20c0e0'), f('M5 5h4v3H5z', '#e8e020'), f('M9 5h4v3H9z', '#2020d0'), s('M4 11h10l-1 3.500H3z', '#303030', 1, '#d0d0c8'), s('M5 13h7')),
  msnOff: g(dot(10, 3.500, 2.300, '#408088'), f('M7 6h6l1 7-6 2-3-3z', '#508890'), f('M1 9l4-3 2 6-3 2z', '#60a8a0'), dot(11.500, 11.500, 4, '#e02020'), s('M10 10l3 3M13 10l-3 3', '#fff', 1.200)),
};

const Icon = ({ n, className = 'size-[27px]' }) => (
  <svg viewBox="0 0 16 16" className={`shrink-0 overflow-visible ${className}`} fill="none" aria-hidden="true">{ICONS[n]}</svg>
);

const Gradients = () => (
  <svg className="absolute size-0" aria-hidden="true">
    <defs>
      {[
        ['gold', '#fff8a0', '#e8c400', '#806000'], ['silver', '#ffffff', '#b8b8bc', '#606068'],
        ['iron', '#c0c0c0', '#707070', '#303030'], ['red', '#ff9090', '#e80000', '#600000'],
        ['cyan', '#a0f0ff', '#10a0d0', '#004060'], ['green', '#90ffb8', '#00b868', '#004828'],
        ['pink', '#ffe0e0', '#e09090', '#a06060'], ['earth', '#80a0ff', '#2030c0', '#080840'],
      ].map(([id, a, b, c]) => (
        <radialGradient key={id} id={id} cx="0.38" cy="0.32" r="0.7">
          <stop offset="0" stopColor={a} /><stop offset="0.45" stopColor={b} /><stop offset="1" stopColor={c} />
        </radialGradient>
      ))}
      <linearGradient id="steel" x1="0" y1="0" x2="1" y2="1"><stop offset="0" stopColor="#88b8cc" /><stop offset="0.5" stopColor="#284858" /><stop offset="1" stopColor="#101c24" /></linearGradient>
    </defs>
  </svg>
);

/* ---------- building blocks ---------- */
const ToolButton = ({ n, on }) => (
  <button aria-label={n} className={`grid h-9 place-items-center ${on ? 'border-2 border-t-[#606060] border-l-[#606060] border-r-white border-b-white bg-[#e6e4de]' : ''}`}>
    <Icon n={n} />
  </button>
);

const Bar = ({ v }) => (
  <span className={`${v ? 'w-[5px] border-l-2 border-r-2' : 'h-[5px] border-t-2 border-b-2'} border-t-white border-l-white border-r-[#909090] border-b-[#909090] bg-[#ecebe6]`} />
);
const VGrip = ({ className = 'h-[35px]' }) => <span className={`flex shrink-0 gap-px ${className}`}><Bar v /><Bar v /></span>;
const HGrip = ({ className = '' }) => <span className={`flex flex-col gap-px ${className}`}><Bar /><Bar /></span>;

const DockV = ({ up }) => (
  <div className={`flex w-[14px] shrink-0 flex-col items-center gap-0.5 border-r border-r-[#808080] border-b border-b-[#808080] py-0.5 ${up ? '' : 'flex-col-reverse'}`}>
    <span className={`w-[6px] flex-1 ${DOTS}`} />
    <svg viewBox="0 0 10 5" className="h-[5px] w-[10px]"><path d={up ? 'M0 5L5 0l5 5z' : 'M0 0h10L5 5z'} fill="#0000a0" /></svg>
  </div>
);
const DockH = ({ right }) => (
  <div className={`flex h-[15px] shrink-0 items-center gap-0.5 border-b border-b-[#808080] border-t border-t-white pr-0.5 pl-1 ${right ? 'flex-row-reverse' : ''}`}>
    <span className={`h-[10px] flex-1 ${DOTS}`} />
    <svg viewBox="0 0 5 10" className="h-[10px] w-[5px]"><path d={right ? 'M0 0l5 5-5 5z' : 'M5 0L0 5l5 5z'} fill="#0000a0" /></svg>
  </div>
);

const Group = ({ children, className = '' }) => (
  <div className={`flex items-center border border-t-white border-l-white border-r-[#808080] border-b-[#808080] pl-1 ${className}`}>{children}</div>
);

const Field = ({ label, value, className }) => (
  <input aria-label={label} defaultValue={value} className={`h-8 bg-white px-0.5 text-[16px] text-black outline-none ${SUNKEN} ${className}`} />
);

const Combo = ({ id, label, options, className }) => (
  <span className={`flex h-[30px] bg-white ${SUNKEN} ${className}`}>
    <select id={id} aria-label={label} className="min-w-0 flex-1 appearance-none bg-transparent pl-1 text-[16px] text-black outline-none">
      {options.map((o) => <option key={o}>{o}</option>)}
    </select>
    <span className={`pointer-events-none my-px mr-px grid w-[22px] place-items-center ${RAISED}`}>
      <svg viewBox="0 0 12 6" className="h-[6px] w-[12px]"><path d="M0 0h12L6 6z" /></svg>
    </span>
  </span>
);

const Check = ({ children, checked, className = 'h-[30px]' }) => (
  <label className={`flex items-center gap-2.5 ${className}`}>
    <span className="grid size-[18px]">
      <input type="checkbox" defaultChecked={checked} className={`peer size-[18px] appearance-none bg-white [grid-area:1/1] ${SUNKEN}`} />
      <svg viewBox="0 0 18 18" className="pointer-events-none hidden size-[18px] [grid-area:1/1] peer-checked:block" fill="none"><path d="M5 8l3 4 6-7" stroke="#000" strokeWidth="3" /></svg>
    </span>
    {children}
  </label>
);

const Box = ({ title, children, className = '' }) => (
  <fieldset className={`min-w-0 border border-[#808080] shadow-[1px_1px_0_#fff,inset_1px_1px_0_#fff] ${className}`}>
    <legend className="-ml-0.5 bg-[#d4d0c8] px-0.5 leading-5">{title}</legend>
    {children}
  </fieldset>
);

const CONNECTOR = { v: 'M13 0V24', t: 'M13 0V24M13 12H27', l: 'M13 0V12H27', f: 'M13 12V24M13 12H27' };
const Cell = ({ k }) => {
  const lines = { '+': 't', '-': 't', P: 'l', M: 'l' }[k] || k;
  const box = '+-PM'.includes(k);
  const plus = k === '+' || k === 'P';
  const svg = (
    <svg viewBox="0 0 29 24" preserveAspectRatio="none" className="h-full w-[29px]" fill="none" shapeRendering="crispEdges">
      {CONNECTOR[lines] && <path d={CONNECTOR[lines]} stroke="#808080" strokeWidth="1" strokeDasharray="1 2" />}
      {box && <path d="M6.500 5.500h13v13h-13z" fill="#fff" stroke="#808080" />}
      {box && <path d={plus ? 'M9 12h8M13 8v8' : 'M9 12h8'} stroke="#000" strokeWidth="2" />}
    </svg>
  );
  return box ? <button aria-label={plus ? 'Expand' : 'Collapse'} className="block h-full">{svg}</button> : svg;
};

const Tree = ({ rows }) => (
  <ul className="grid h-[365px] auto-rows-fr">
    {rows.map(([cells, icon, label, cls = '']) => (
      <li key={label} className="flex items-center">
        {cells.split('').map((k, i) => <Cell key={i} k={k} />)}
        {icon && <Icon n={icon} className="mr-[5px] size-6" />}
        <span className={`px-[3px] leading-6 whitespace-nowrap ${cls}`}>{label}</span>
      </li>
    ))}
  </ul>
);

const CaptionButtons = () => (
  <div className="flex pr-[3px]">
    <button aria-label="Minimize" className={`h-[21px] w-6 ${RAISED}`}><svg viewBox="0 0 20 17" className="size-full"><path d="M4 12h9v3H4z" /></svg></button>
    <button aria-label="Restore" className={`h-[21px] w-6 ${RAISED}`}><svg viewBox="0 0 20 17" className="size-full" fill="none" stroke="#000" strokeWidth="1.500"><path d="M7 5V2h8v7h-3M7 2.700h8M4 6.500h8v7.500H4zM4 7.500h8" /></svg></button>
    <button aria-label="Close" className={`ml-[3px] h-[21px] w-6 ${RAISED}`}><svg viewBox="0 0 20 17" className="size-full" fill="none" stroke="#000" strokeWidth="2"><path d="M5 3l10 11M15 3L5 14" /></svg></button>
  </div>
);

/* ---------- sections ---------- */
const MENUS = ['File', 'Design', 'View', 'Analyse', 'Model', 'Grid Calc', 'Rsvute', 'Block', 'Geology', 'Tools', 'Window', 'Help'];

const Header = () => (
  <header>
    <div className={`flex h-[27px] items-center gap-[3px] border-t border-t-[#d4d0c8] bg-gradient-to-r from-[#808080] to-[#c4c4c4] pl-[3px] text-[17px] font-bold text-[#d4d0c8] ${UI}`}>
      <Icon n="cv" className="h-[20px] w-6" />
      <h1 className="flex-1 whitespace-pre">{'VULCAN:Envisage  D:\\CURSO - [CURSO.DG1(*)]'}</h1>
      <CaptionButtons />
    </div>
    <div className="flex h-8 items-center border-b border-b-[#808080] pl-1.5">
      <Icon n="steps" className="h-[23px] w-6" />
      <nav className={`flex flex-1 text-[15px] text-[#808080] ${UI}`}>
        {MENUS.map((m) => <button key={m} className="pr-[10px] pl-[9px]">{m}</button>)}
      </nav>
      <CaptionButtons />
    </div>
  </header>
);

const BAR1 = ['new', 'open', 'dbs', 'layersX', 'triX', 'undo', 'redo', 'save', 'print', 'winNew', 'winDel', 'help'];
const BAR2 = ['xyz', 'dist', 'bearing', 'sq', 'sqPage', 'circ', 'arc', 'cross', 'angleR', 'docR', 'axes', 'textX', 'legend', 'docQ', 'shapesQ'];
const BAR3 = ['balls3', 'ballGold', 'ballSilver', 'ballIron', 'ballsGold', 'ballsSilver', 'ballsIron', 'picGold', 'picSilver', 'picIron'];

const Toolbars = () => (
  <>
    <div className="flex h-[41px]">
      <DockV up />
      <Group className="pr-1"><VGrip /><div className="ml-[3px] grid w-[434px] auto-cols-fr grid-flow-col">{BAR1.map((n) => <ToolButton key={n} n={n} />)}</div></Group>
      <Group className="pr-1"><VGrip /><div className="grid w-[546px] auto-cols-fr grid-flow-col">{BAR2.map((n) => <ToolButton key={n} n={n} />)}</div></Group>
    </div>
    <div className="flex h-[41px] border-b border-b-[#808080]">
      <DockV up />
      <Group className="gap-[9px]">
        <VGrip className="-mr-1 h-[35px]" />
        <span>Window:</span><Combo label="Window" options={['CURSO.DG1(*)']} className="w-[203px]" />
        <span>Layer:</span><Combo label="Layer" options={['LAYER']} className="w-[203px]" />
        <span>Z:</span><Field label="Z" value="2500" className="w-[95px]" />
        <span>W:</span><Field label="W" value="0" className="w-[72px]" />
        <span>Grad:</span><Field label="Grad" value="0:1" className="w-[71px]" />
        <div className="ml-0.5 flex h-8 gap-px">
          <button aria-label="Colour" className={`w-[45px] p-0.5 ${RAISED}`}><span className="block size-full border-r-2 border-b-2 border-black bg-[#00ff00]" /></button>
          <button aria-label="Fill" className={`w-[48px] p-0.5 ${RAISED}`}><span className="block size-full bg-white" /></button>
          <button aria-label="Line style" className={`w-[48px] p-0.5 ${RAISED}`}><span className="block h-[2px] bg-[#202020]" /></button>
          <div className="-mt-0.5 grid w-[109px] grid-cols-3">{['info', 'props', 'triProps'].map((n) => <ToolButton key={n} n={n} />)}</div>
        </div>
      </Group>
      <Group><VGrip /><div className="ml-1 grid w-[362px] auto-cols-fr grid-flow-col">{BAR3.map((n) => <ToolButton key={n} n={n} />)}</div></Group>
    </div>
  </>
);

const DATA_TREE = [
  ['', 'folder', 'D:\\CURSO'],
  ['+', 'fBlock', 'Block Models'],
  ['-', 'fLayers', 'Design Databases'],
  ['vM', 'lock', 'chqcurso.dgd', 'font-bold text-[17px] text-[#ff0000]'],
  ['v l', 'sheets', 'LAYER', 'font-bold text-[17px] text-white bg-[#0a246a]'],
  ['+', 'fGrid', 'Gdcalc'],
  ['+', 'fGrid', 'Grids'],
  ['+', 'fImage', 'Images'],
  ['+', 'folder', 'Import/Export'],
  ['+', 'fScript', 'Lava Scripts'],
  ['+', 'folder', 'Other'],
  ['+', 'fPlot', 'Plots'],
  ['+', 'fSpec', 'Specifications'],
  ['+', 'fTri', 'Triangulations'],
  ['P', 'fDb', 'User Databases'],
];

const Explorer = () => (
  <aside className="flex w-[307px] shrink-0 flex-col">
    <DockH />
    <div className="flex items-center gap-[3px] pt-[5px] pr-px pl-[5px]">
      <HGrip className="flex-1" />
      <button aria-label="Collapse panel" className={`grid size-[19px] place-items-center ${RAISED}`}><svg viewBox="0 0 10 6" className="w-[10px]"><path d="M0 6l5-6 5 6z" fill="#808080" /></svg></button>
      <button aria-label="Close panel" className={`grid size-[19px] place-items-center ${RAISED}`}><svg viewBox="0 0 10 10" className="w-[10px]"><path d="M1 1l8 8M9 1L1 9" stroke="#000" strokeWidth="2.500" /></svg></button>
    </div>
    <div className="mt-[5px] mr-1 ml-[5px] flex flex-1 flex-col border-2 border-t-white border-l-white border-r-[#808080] border-b-[#808080] px-[10px] pb-[9px]">
      <h2 className="flex h-[46px] items-center pl-1.5"><Icon n="explore" className="mr-[9px] size-[25px]" />Windows Explorer</h2>
      <div className="flex-1 bg-white"><Tree rows={DATA_TREE} /></div>
    </div>
    <div className="mb-1 flex h-[36px] gap-[3px] pl-[19px]">
      {[['folder', 'Data', 'w-[72px]'], ['fRes', 'Resou...', 'w-[99px]'], ['fSpec', 'Envisa...', 'w-[98px]']].map(([n, t, w], i) => (
        <button key={t} className={`flex items-center gap-[3px] rounded-b border-2 border-t-0 border-l-white border-r-[#404040] border-b-[#404040] pl-0.5 whitespace-nowrap ${w} ${i ? 'mt-0.5' : ''}`}>
          <Icon n={n} className="size-6" />{t}
        </button>
      ))}
    </div>
  </aside>
);

const PALETTE = [
  ['layersNew', 'point', 'line', 'poly', 'image', 'curve', 'arc3', 'dots9', 'arrowO', 'arrowB', 'A', 'A3d', 'imgPage', 'ribbon'],
  ['del', 'moveC', 'ptMove', 'lineAdd', 'renum', 'cut', 'brk', 'brk2', 'sqWin', 'fillet', 'expand', 'copy', 'bomb'],
  ['moveM', 'mPt', 'mX', 'mGrid', 'hand', 'mSurf', 'mRule', 'mLine', 'mLine2', 'mZ', 'mTri', 'rotate', 'mBrk'],
  ['dbList', 'layList', 'triList', 'cubeList', 'gridList'],
  ['snapPt', 'snapLn', 'snapTri', 'snapX', 'snapRule', 'snapMid', 'snapCrv', 'snapAng', 'snapSurf', 'snapCen'],
  ['ed1', 'ed2', 'ed3', 'ed4', 'ed5', 'ed6', 'ed7', 'ed8', 'ed9', 'ed10', 'ed11', 'ed12'],
];

const Palette = () => (
  <aside className="w-[188px] shrink-0 border-l border-l-white pr-px">
    <DockH />
    {PALETTE.map((names) => (
      <div key={names[0]} className="border border-t-white border-l-white border-r-[#808080] border-b-[#808080] px-px pt-0.5 pb-[3px]">
        <HGrip />
        <div className="mt-[3px] grid grid-cols-5">{names.map((n) => <ToolButton key={n} n={n} />)}</div>
      </div>
    ))}
  </aside>
);

const PREF_TREE = [
  ['f', null, 'Appearance'],
  ['t', null, 'Dialogs and Popups'],
  ['-', null, 'Graphics'],
  ['vt', null, 'Input', 'bg-[#0a246a] text-white'],
  ['vt', null, 'Colours'],
  ['vt', null, 'Effects'],
  ['vl', null, 'Video Capture'],
  ['-', null, 'File Types'],
  ['vt', null, 'Triangulations'],
  ['vl', null, 'Grids'],
  ['t', null, 'Miscellaneous'],
  ['t', null, 'Plot All'],
  ['M', null, 'Applications'],
  [' t', null, 'Plotting Utility'],
  [' l', null, 'Vulcan Explorer'],
];

const Preferences = () => (
  <section role="dialog" aria-label="Preferences" className="flex flex-1 flex-col border-2 border-t-[#d4d0c8] border-l-[#d4d0c8] border-r-[#404040] border-b-[#404040] bg-[#d4d0c8] p-[3px] shadow-[inset_1px_1px_0_#fff,inset_-1px_-1px_0_#808080]">
    <div className={`flex h-[27px] shrink-0 items-center justify-between bg-gradient-to-r from-[#0a246a] to-[#a6caf0] pr-[3px] pl-0.5 text-[17px] font-bold text-white ${UI}`}>
      <h2>Preferences</h2>
      <button aria-label="Close" className={`h-[21px] w-[25px] ${RAISED}`}><svg viewBox="0 0 20 17" className="size-full" fill="none" stroke="#000" strokeWidth="2"><path d="M5 3l10 11M15 3L5 14" /></svg></button>
    </div>
    <div className="mt-[18px] flex flex-1 gap-4 pr-[17px] pl-4">
      <div className={`w-[301px] shrink-0 bg-white pt-px ${SUNKEN}`}><Tree rows={PREF_TREE} /></div>
      <Box title="Input" className="flex-1 px-[11px]">
        <div className="flex flex-col gap-0.5 px-[11px] pt-[10px]">
          <Box title="Rotation" className="px-[13px] pt-0.5 pb-[13px]">
            <Check checked>Enter snap mode when choosing rotation centre</Check>
            <div className="mt-px grid auto-rows-[31px] grid-cols-[max-content_max-content] gap-x-[5px]">
              <label htmlFor="mode" className="leading-[27px]">Default rotate mode</label><Combo id="mode" options={['Virtual Sphere']} className="w-[198px]" />
              <label htmlFor="centre" className="leading-[27px]">Centre rotation mouse movements on</label><Combo id="centre" options={['Rotation centre']} className="w-[198px]" />
              <label htmlFor="speed" className="leading-[27px]">Rotation speed</label><input id="speed" defaultValue="5.0" className={`h-[30px] w-[73px] bg-white px-0.5 ${SUNKEN}`} />
            </div>
          </Box>
          <Box title="Fly mode" className="px-[13px] pt-0.5 pb-[12px]">
            <Check>Do not fly through surfaces</Check>
            <Check>Invert mouse Y direction</Check>
          </Box>
          <Box title={<Check checked className="h-5">Reset Snap Mode for Each Menu</Check>} className="px-[13px] pt-[3px] pb-[14px]">
            <div className="flex gap-2">
              <label htmlFor="snap" className="leading-[27px]">Snap mode</label><Combo id="snap" options={['Point Snap']} className="w-[297px]" />
            </div>
          </Box>
          <Box title="Picking" className="px-[13px] pt-0.5 pb-[13px]">
            <div className="flex gap-2">
              <label htmlFor="pick" className="leading-[27px]">Pick aperture (pixels)</label><input id="pick" defaultValue="6" className={`h-[30px] w-[73px] bg-white px-0.5 ${SUNKEN}`} />
            </div>
            <Check>Show pick aperture when picking</Check>
            <Check>Show pick aperture when snapping</Check>
          </Box>
          <Box title="Wheel" className="px-[13px] pt-[3px] pb-[12px]">
            <Check>Reverse wheel zoom direction</Check>
          </Box>
        </div>
      </Box>
    </div>
    <div className="flex h-[58px] shrink-0 items-center gap-2 pt-2 pr-[5px] pl-[10px]">
      <button aria-label="Help" className="mr-auto"><Icon n="help" /></button>
      <button className={`h-9 w-[114px] ${RAISED}`}>OK</button>
      <button className={`h-9 w-[115px] ${RAISED}`}>Cancel</button>
    </div>
  </section>
);

const SIDE = [
  ['magnify', 'twoWin', 'axis', 'axisBall', 'eye'],
  ['R', 'globe', 'winSplit', 'winPic', 'handWand'],
  ['picture', 'box', 'layersCol', 'wire', 'wins', 'grid', 'gridTarget'],
];

const SideBar = () => (
  <aside className="w-[42px] shrink-0">
    <DockH right />
    <div className="border border-t-white border-l-white border-r-[#808080] border-b-[#808080] px-[3px] pt-0.5 pb-[3px]">
      <HGrip className="mb-[3px]" />
      {SIDE.map((names, i) => (
        <div key={names[0]} className={`grid auto-rows-[36px] ${i ? 'mt-0.5 border-t-2 border-t-[#808080] pt-[3px]' : 'gap-px'}`}>
          {names.map((n) => <ToolButton key={n} n={n} on={['picture', 'box', 'layersCol'].includes(n)} />)}
        </div>
      ))}
    </div>
  </aside>
);

const ViewBar = () => (
  <div className="flex h-[40px] shrink-0">
    <DockV />
    <Group>
      <VGrip />
      <div className="ml-0.5 grid w-[147px] grid-cols-4">{['pointer', 'snapSq', 'snapDi', 'gridB'].map((n) => <ToolButton key={n} n={n} on={n === 'pointer'} />)}</div>
      <span className="h-[30px] border-l border-l-[#808080]" />
      <div className="ml-[3px] grid w-[145px] grid-cols-4">{['keys', 'compass', 'angle', 'waves'].map((n) => <ToolButton key={n} n={n} />)}</div>
      <span className="mr-1 h-[30px] border-l border-l-[#808080]" />
      <label htmlFor="zoom" className="mr-2.5">Zoom:</label>
      <input id="zoom" defaultValue="0.8" className={`h-8 w-[60px] bg-white px-0.5 ${SUNKEN}`} />
      <div className="ml-2 w-9"><ToolButton n="bigX" /></div>
    </Group>
    <Group><VGrip /><div className="ml-px grid w-[182px] grid-cols-5">{['ballGold', 'ballSilver', 'ballIron', 'ballRed', 'ballsSea'].map((n) => <ToolButton key={n} n={n} />)}</div></Group>
  </div>
);

const LOG = `Object    : LINE_11    (LINE digitising 14-Jun-2005 08:44:35    )
Value     : 2500.000
Group     : Not defined
Primitive : Not defined
Feature   : Not defined`;

const Arrow = ({ d, c = '#000', label, className }) => (
  <button aria-label={label} className={`grid place-items-center ${RAISED} ${className}`}><svg viewBox="0 0 10 10" className="size-[11px]"><path d={d} fill={c} /></svg></button>
);

const Tab = ({ children, on, w }) => (
  <button className={`relative -ml-3 grid h-6 place-items-center ${on ? 'z-10' : ''} ${w}`}>
    <svg viewBox="0 0 120 24" preserveAspectRatio="none" className="absolute inset-0 size-full" fill={on ? '#fff' : '#d4d0c8'}>
      <path d="M1 0L11 23H109L119 0" stroke="#000" strokeWidth="2" vectorEffect="non-scaling-stroke" />
    </svg>
    <span className="relative">{children}</span>
  </button>
);

const Console = () => (
  <div className="mt-1 flex min-h-0 flex-1 border-t border-t-white pt-px">
    <DockV />
    <div className="ml-1.5 flex w-[19px] shrink-0 flex-col items-center pt-px">
      <button aria-label="Close panel" className={`grid size-[19px] place-items-center ${RAISED}`}><svg viewBox="0 0 10 10" className="w-[9px]"><path d="M1 1l8 8M9 1L1 9" stroke="#000" strokeWidth="2.500" /></svg></button>
      <Arrow label="Collapse panel" d="M7 0v10L2 5z" c="#808080" className="mt-0.5 size-[19px]" />
      <VGrip className="mt-px mb-1 flex-1" />
    </div>
    <div className="mt-px mr-1 mb-[7px] ml-1.5 flex flex-1 flex-col border-2 border-t-[#808080] border-l-[#808080] border-r-white border-b-white">
      <div className="flex min-h-0 flex-1">
        <div className="flex w-[35px] shrink-0 flex-col items-center gap-[5px] pt-[3px] pr-1">
          {['x', 'print', 'save', 'eraser'].map((n) => <button key={n} aria-label={n}><Icon n={n} className="block size-6" /></button>)}
        </div>
        <div className={`mt-0.5 flex flex-1 bg-white ${SUNKEN}`}>
          <pre className="flex-1 overflow-hidden font-['DejaVu_Sans_Mono',monospace] text-[20px] leading-5">{LOG}</pre>
          <div className={`flex w-[23px] flex-col ${HATCH}`}>
            <Arrow label="Scroll up" d="M0 8h10L5 2z" className="h-6" />
            <span className={`mt-auto mb-0.5 h-3 ${RAISED}`} />
            <Arrow label="Scroll down" d="M0 2h10L5 8z" className="h-6" />
          </div>
        </div>
      </div>
      <div className="mt-px flex h-6">
        <Arrow label="Previous tab" d="M7 0v10L2 5z" c="#808080" className="w-[23px]" />
        <Arrow label="Next tab" d="M3 0v10l5-5z" c="#808080" className="mr-[14px] w-[23px]" />
        <Tab w="w-[124px]">Workbench</Tab>
        <Tab w="w-[171px]">Envisage Console</Tab>
        <Tab w="w-[114px]" on>Envisage</Tab>
        <div className={`ml-auto flex w-[548px] ${HATCH}`}>
          <span className={`w-[9px] ${RAISED}`} />
          <Arrow label="Scroll left" d="M7 0v10L2 5z" c="#808080" className="w-6" />
          <Arrow label="Scroll right" d="M3 0v10l5-5z" c="#808080" className="ml-auto w-6" />
        </div>
      </div>
    </div>
  </div>
);

const StatusBar = () => (
  <footer className="flex h-[39px] shrink-0 items-center gap-[3px] border-t border-t-white pr-1.5 pl-[7px]">
    <span className={`h-[27px] flex-[686] truncate text-[17px] leading-[22px] font-bold ${UI} ${THIN_SUNKEN}`}>Select menu option</span>
    <span className={`h-[27px] flex-[306] truncate leading-[22px] ${THIN_SUNKEN}`}>76721.21 , 4459.73, 2500.00</span>
    <span className={`h-[27px] flex-[304] ${THIN_SUNKEN}`} />
    <span className={`h-[27px] flex-[228] truncate leading-[22px] ${THIN_SUNKEN}`}>chqcurso.dgd</span>
    <div className="ml-1 flex items-center gap-1">
      {['steps', 'pane1', 'pane2'].map((n) => <button key={n} aria-label={n} className={`size-[27px] ${THIN_SUNKEN}`}><Icon n={n} className="size-full" /></button>)}
      <button aria-label="Help"><Icon n="helpDoc" className="size-[25px]" /></button>
      <button className="ml-1 flex items-center gap-0.5"><Icon n="cv" className="h-[21px] w-[23px]" />Start</button>
    </div>
  </footer>
);

const TaskBar = () => (
  <footer className={`flex h-10 shrink-0 items-center border-t border-t-white pr-1 pl-1 text-[16px] ${UI}`}>
    <button className={`flex h-[33px] w-[86px] items-center gap-0.5 pl-[3px] font-bold ${RAISED}`}><Icon n="flag" className="size-[25px]" />Inicio</button>
    <span className="ml-1 h-[33px] w-0.5 border-l border-l-[#808080] bg-white" />
    <span className="ml-1.5 flex h-[29px]"><Bar v /></span>
    <div className="ml-1 grid w-[142px] grid-cols-4">{['ie', 'outlook', 'edit', 'msn'].map((n) => <ToolButton key={n} n={n} />)}</div>
    <span className="ml-[5px] h-[33px] w-0.5 border-l border-l-[#808080] bg-white" />
    <span className="mr-2 ml-1 flex h-[29px]"><Bar v /></span>
    <button className={`flex h-[34px] w-[241px] items-center pl-1 font-bold whitespace-pre ${SUNKEN} ${HATCH}`}><Icon n="cv" className="h-[22px] w-6" />{'VULCAN:Envisage  D:\\C...'}</button>
    <button className={`ml-1.5 flex h-[33px] w-[241px] items-center gap-0.5 pl-[3px] whitespace-nowrap ${RAISED}`}><Icon n="ppt" className="size-6" />Microsoft PowerPoint - [P...</button>
    <div className={`ml-auto flex h-[34px] items-center gap-[3px] border border-t-[#808080] border-l-[#808080] border-r-white border-b-white pr-6 pl-1 ${SANS}`}>
      {['speaker', 'net'].map((n) => <Icon key={n} n={n} className="size-6" />)}
      <span className="grid h-6 w-6 place-items-center bg-[#000080] text-[15px] text-white">ES</span>
      {['discA', 'discF', 'display', 'msnOff'].map((n) => <Icon key={n} n={n} className="size-6" />)}
      <time className="ml-6">8:56</time>
    </div>
  </footer>
);

export default function App() {
  return (
    <main className={`flex h-screen flex-col bg-black px-[156px] pt-[111px] pb-[113px] text-[16px] leading-5 text-black ${SANS}`}>
      <Gradients />
      <div className="-mr-1.5 flex min-h-0 flex-1 flex-col bg-[#d4d0c8]">
        <Header />
        <Toolbars />
        <div className="flex min-h-0 flex-1 border-b border-b-[#808080] pt-px">
          <Explorer />
          <Palette />
          <div className="flex min-w-0 flex-1 flex-col border-l-2 border-l-white">
            <div className="flex min-h-0 flex-1">
              <div className="flex flex-1 border-2 border-t-[#606060] border-l-[#606060] border-r-white border-b-white bg-black pt-[29px] pr-4 pb-[50px]">
                <Preferences />
              </div>
              <span className="w-[3px]" />
              <SideBar />
            </div>
            <div className="h-0.5 shrink-0" />
            <ViewBar />
            <div className="flex h-[156px] shrink-0"><Console /></div>
          </div>
        </div>
        <StatusBar />
        <TaskBar />
      </div>
    </main>
  );
}
